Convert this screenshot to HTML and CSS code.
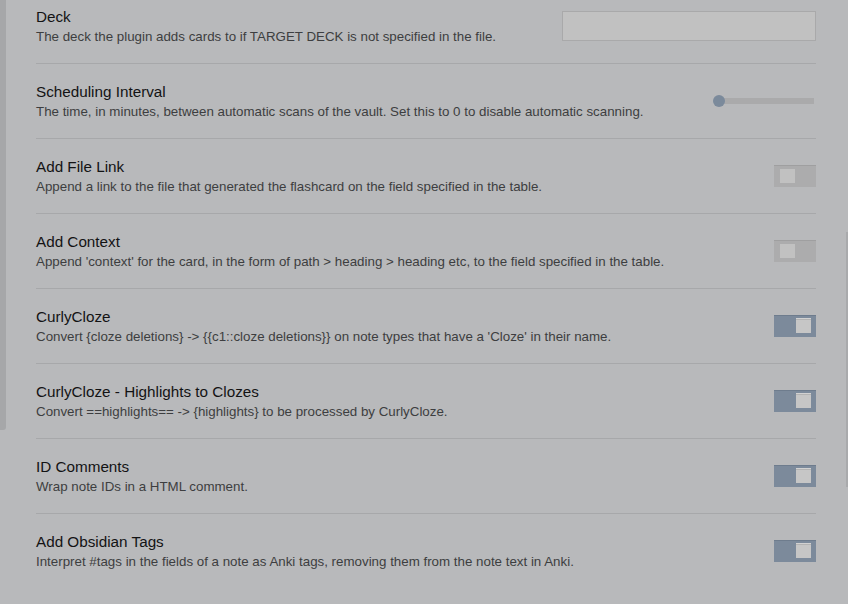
FILE: index.html
```html
<!DOCTYPE html>
<html>
<head>
<meta charset="utf-8">
<link rel="stylesheet" href="styles.css">
</head>
<body>
<div class="page">
  <div class="edge"></div>
  <div class="settings">
    <div class="item">
      <div class="info">
        <div class="name">Deck</div>
        <div class="desc">The deck the plugin adds cards to if TARGET DECK is not specified in the file.</div>
      </div>
      <div class="control"><div class="text-input"></div></div>
    </div>
    <div class="item">
      <div class="info">
        <div class="name">Scheduling Interval</div>
        <div class="desc">The time, in minutes, between automatic scans of the vault. Set this to 0 to disable automatic scanning.</div>
      </div>
      <div class="control"><div class="slider"><div class="slider-thumb"></div></div></div>
    </div>
    <div class="item">
      <div class="info">
        <div class="name">Add File Link</div>
        <div class="desc">Append a link to the file that generated the flashcard on the field specified in the table.</div>
      </div>
      <div class="control"><div class="toggle"><div class="knob"></div></div></div>
    </div>
    <div class="item">
      <div class="info">
        <div class="name">Add Context</div>
        <div class="desc">Append 'context' for the card, in the form of path &gt; heading &gt; heading etc, to the field specified in the table.</div>
      </div>
      <div class="control"><div class="toggle"><div class="knob"></div></div></div>
    </div>
    <div class="item">
      <div class="info">
        <div class="name">CurlyCloze</div>
        <div class="desc">Convert {cloze deletions} -&gt; {{c1::cloze deletions}} on note types that have a 'Cloze' in their name.</div>
      </div>
      <div class="control"><div class="toggle on"><div class="knob"></div></div></div>
    </div>
    <div class="item">
      <div class="info">
        <div class="name">CurlyCloze - Highlights to Clozes</div>
        <div class="desc">Convert ==highlights== -&gt; {highlights} to be processed by CurlyCloze.</div>
      </div>
      <div class="control"><div class="toggle on"><div class="knob"></div></div></div>
    </div>
    <div class="item">
      <div class="info">
        <div class="name">ID Comments</div>
        <div class="desc">Wrap note IDs in a HTML comment.</div>
      </div>
      <div class="control"><div class="toggle on"><div class="knob"></div></div></div>
    </div>
    <div class="item">
      <div class="info">
        <div class="name">Add Obsidian Tags</div>
        <div class="desc">Interpret #tags in the fields of a note as Anki tags, removing them from the note text in Anki.</div>
      </div>
      <div class="control"><div class="toggle on"><div class="knob"></div></div></div>
    </div>
  </div>
  <div class="scrollbar"></div>
</div>
</body>
</html>
```
FILE: styles.css
```css
html, body {
  margin: 0;
  padding: 0;
  width: 848px;
  height: 604px;
  overflow: hidden;
  background: #b8b9bb;
  font-family: "Liberation Sans", Arial, sans-serif;
}
.page {
  position: relative;
  display: flex;
  align-items: flex-start;
  width: 848px;
  height: 604px;
  overflow: hidden;
}
.edge {
  flex: 0 0 6px;
  height: 430px;
  background: #a6a7a9;
  border-bottom-right-radius: 3px;
}
.settings {
  flex: 1;
  margin-top: -12px;
  padding: 0 32px 0 30px;
}
.item {
  display: flex;
  align-items: center;
  height: 74px;
  border-top: 1px solid #a7a8aa;
  box-sizing: content-box;
}
.item:first-child {
  border-top: 1px solid transparent;
}
.info {
  flex: 1;
  padding-top: 18px;
  padding-bottom: 18px;
  align-self: flex-start;
}
.name {
  font-size: 15.25px;
  line-height: 20px;
  color: #131314;
}
.desc {
  font-size: 13.33px;
  line-height: 17px;
  padding-top: 1px;
  color: #3d3e40;
}
.control {
  display: flex;
  justify-content: flex-end;
}
.text-input {
  width: 252px;
  height: 28px;
  background: #c1c1c1;
  border: 1px solid #a9a9aa;
}
.slider {
  position: relative;
  width: 95px;
  height: 6px;
  background: #aaaaab;
  margin-right: 2px;
}
.slider-thumb {
  position: absolute;
  left: -6px;
  top: -3px;
  width: 12px;
  height: 12px;
  border-radius: 50%;
  background: #7b8a9b;
}
.toggle {
  position: relative;
  width: 42px;
  height: 22px;
  background: #acacad;
  box-shadow: inset 0 1px 0 #9f9fa0;
}
.knob {
  position: absolute;
  left: 6px;
  top: 4px;
  width: 15px;
  height: 14px;
  background: #c1c1c1;
}
.toggle.on {
  background: #7c8a9b;
  box-shadow: inset 0 1px 0 #6e7c8d;
}
.toggle.on .knob {
  left: 22px;
  top: 3px;
  height: 15px;
  background: #c6c6c6;
  box-shadow: inset 0 1px 0 #d2d2d2, inset 0 2px 0 #b3b3b3;
}
.scrollbar {
  position: absolute;
  right: 0;
  top: 232px;
  width: 2px;
  height: 255px;
  background: #a9aaac;
}
```
